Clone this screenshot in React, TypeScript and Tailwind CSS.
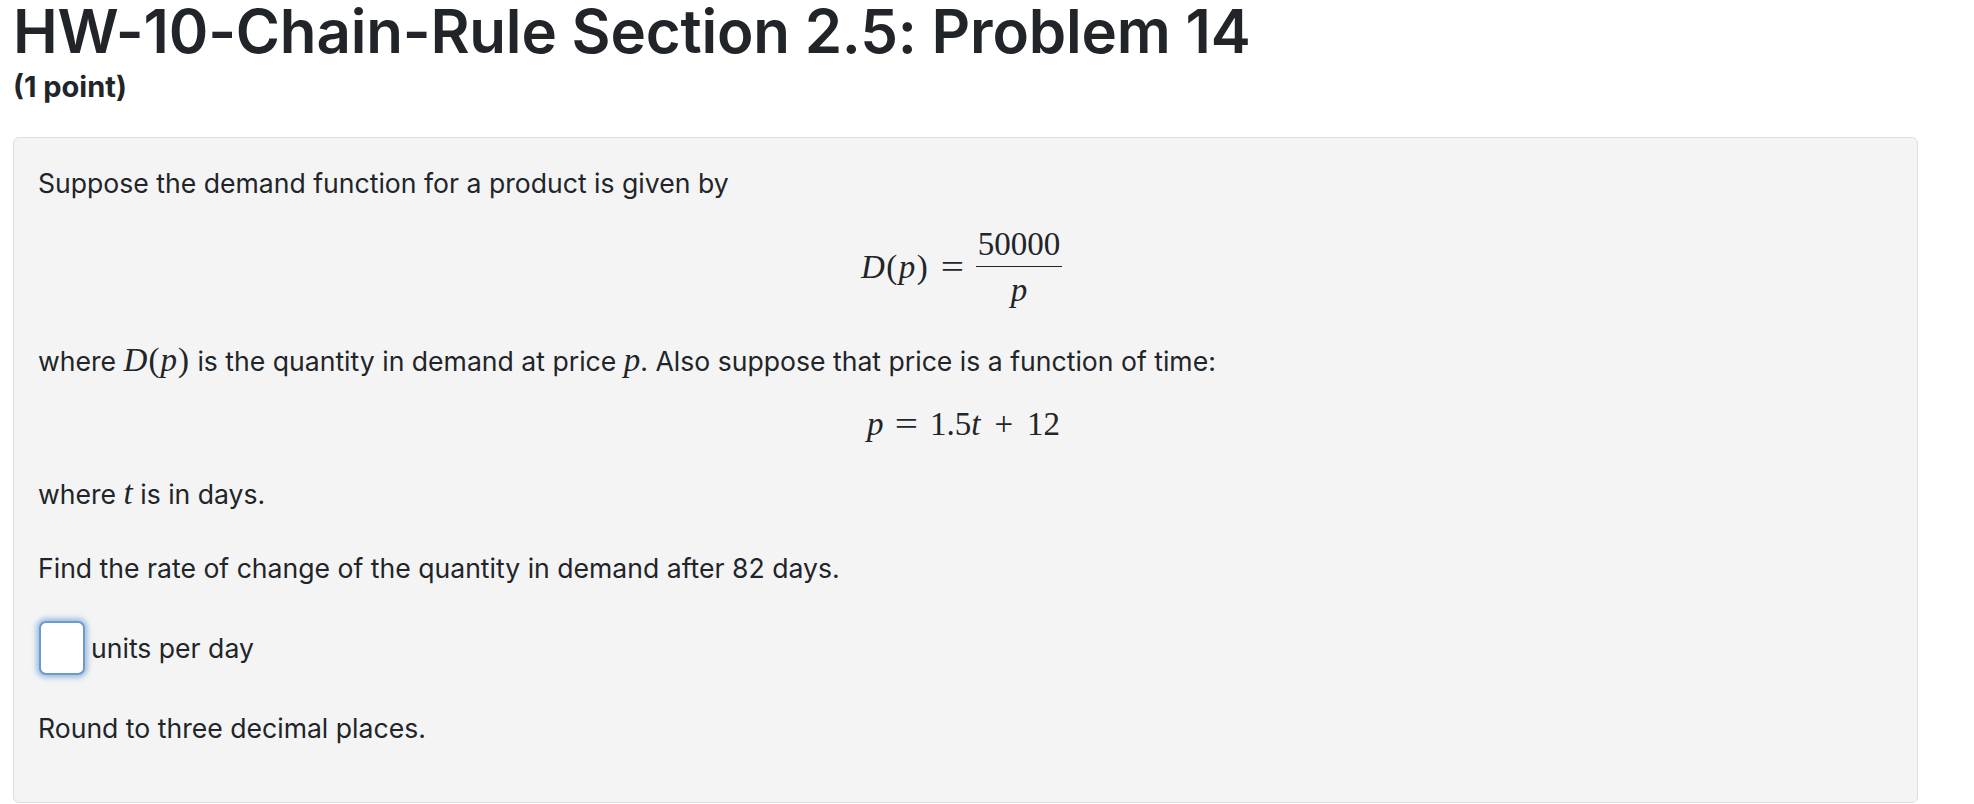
import React, { useState } from "react";

const sans = { fontFamily: "Inter, 'Liberation Sans', sans-serif" };

// Math text pieces, serif italic to stand in for the TeX font
const M = ({ children }: { children: React.ReactNode }) => (
  <span className="font-['Liberation_Serif',serif] italic text-[33px]">{children}</span>
);
const R = ({ children }: { children: React.ReactNode }) => (
  <span className="font-['Liberation_Serif',serif] text-[33px]">{children}</span>
);

const App = () => {
  const [answer, setAnswer] = useState("");

  return (
    <div className="pl-[13px] text-[#212529] bg-white min-h-[804px]" style={sans}>
      <h1 className="text-[60px] leading-[62px] font-semibold tracking-[-0.2px]">
        HW-10-Chain-Rule Section 2.5: Problem 14
      </h1>
      <div className="mt-[10px] text-[29px] leading-[29px] font-bold">(1 point)</div>

      {/* Problem body */}
      <div className="mt-[36px] w-[1905px] border border-[#dedede] rounded-[6px] bg-[#f4f4f4] pl-[24px] pr-[24px] pt-[27px] pb-[56px] text-[26.6px] leading-[36px]">
        <p>Suppose the demand function for a product is given by</p>

        <div className="h-[141px] flex items-center justify-center pb-[8px]">
          <div className="flex items-center gap-[14px] pr-[8px]">
            <span className="tracking-[1.5px]">
              <M>D</M>
              <R>(</R>
              <M>p</M>
              <R>)</R>
            </span>
            <span className="inline-block scale-x-125">
              <R>=</R>
            </span>
            <div className="flex flex-col items-center">
              <div className="leading-none pb-[5px]">
                <R>50000</R>
              </div>
              <div className="w-[86px] h-[1px] bg-[#212529]"></div>
              <div className="leading-none pt-[7px]">
                <M>p</M>
              </div>
            </div>
          </div>
        </div>

        <p>
          where{" "}
          <span className="font-['Liberation_Serif',serif] text-[33px] tracking-[1px]">
            <i>D</i>(<i>p</i>)
          </span>{" "}
          is the quantity in demand at price{" "}
          <span className="font-['Liberation_Serif',serif] text-[33px] italic">p</span>. Also suppose that price is a
          function of time:
        </p>

        <div className="h-[96px] flex items-center justify-center pb-[6px]">
          <div className="font-['Liberation_Serif',serif] text-[33px] flex items-center gap-[14px] pr-[4px]">
            <i>p</i>
            <span className="inline-block scale-x-125">=</span>
            <span>
              1.5<i>t</i>
            </span>
            <span>+</span>
            <span>12</span>
          </div>
        </div>

        <p className="mb-[38px]">
          where <span className="font-['Liberation_Serif',serif] text-[33px] italic">t</span> is in days.
        </p>

        <p>Find the rate of change of the quantity in demand after 82 days.</p>

        <div className="mt-[35px] flex items-center h-[53px]">
          <input
            type="text"
            value={answer}
            onChange={(e) => setAnswer(e.target.value)}
            className="w-[46px] h-[54px] bg-white border-2 border-[#6f98cc] rounded-[7px] shadow-[0_0_5px_3px_rgba(100,150,215,0.55)] outline-none mr-[6px] ml-[1px] px-1"
          />
          <span>units per day</span>
        </div>

        <p className="mt-[36px]">Round to three decimal places.</p>
      </div>
    </div>
  );
};

export default App;
